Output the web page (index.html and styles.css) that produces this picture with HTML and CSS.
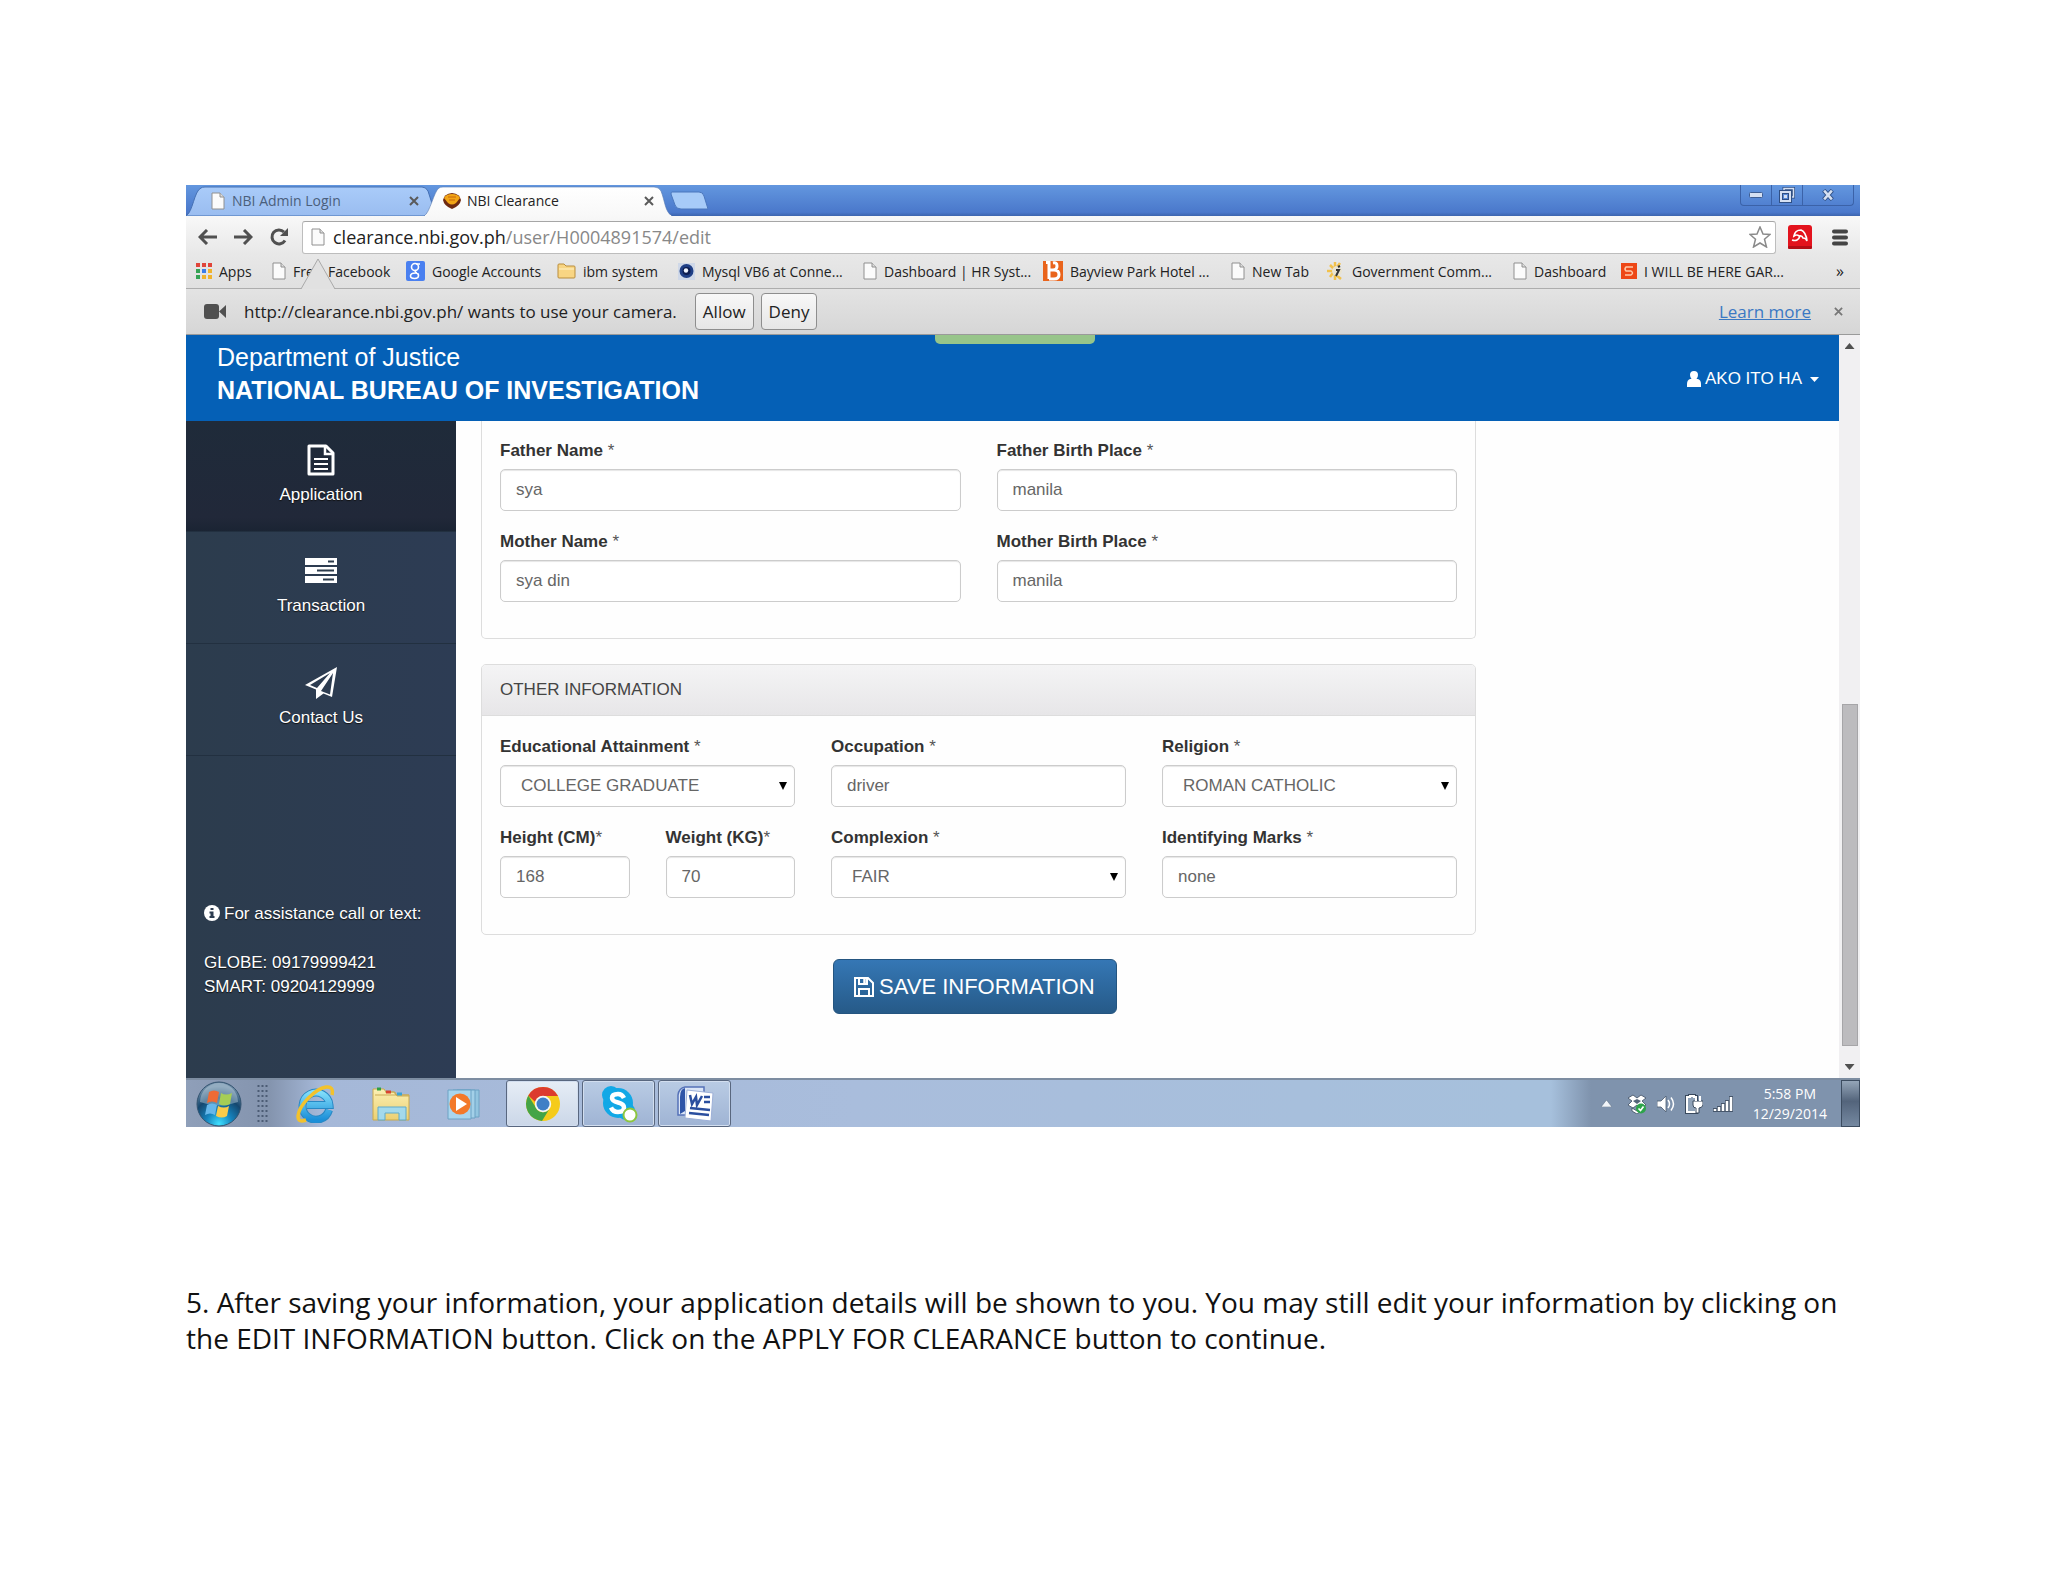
FILE: index.html
```html
<!DOCTYPE html>
<html lang="en">
<head>
<meta charset="utf-8">
<title>NBI Clearance guide</title>
<link rel="stylesheet" href="styles.css">
</head>
<body>
<svg class="defs" aria-hidden="true">
  <defs>
    <linearGradient id="tabBlue" x1="0" y1="0" x2="0" y2="1"><stop offset="0" stop-color="#a9cbf9"/><stop offset="1" stop-color="#9abdf0"/></linearGradient>
    <linearGradient id="tabWhite" x1="0" y1="0" x2="0" y2="1"><stop offset="0" stop-color="#fff"/><stop offset="1" stop-color="#f8f8f8"/></linearGradient>
    <radialGradient id="orb" cx=".5" cy=".95" r=".85"><stop offset="0" stop-color="#3fe0ff"/><stop offset=".35" stop-color="#1583bd"/><stop offset=".7" stop-color="#15476f"/><stop offset="1" stop-color="#6c8ba5"/></radialGradient>
    <linearGradient id="ie" x1="0" y1="0" x2="0" y2="1"><stop offset="0" stop-color="#7fdcfa"/><stop offset="1" stop-color="#1c8fd8"/></linearGradient>
    <linearGradient id="folder" x1="0" y1="0" x2="0" y2="1"><stop offset="0" stop-color="#fbf0b4"/><stop offset="1" stop-color="#ecd072"/></linearGradient>
    <symbol id="doc" viewBox="0 0 14 18"><path d="M1 1h8l4 4v12H1z" fill="#fbfbfb" stroke="#909090"/><path d="M9 1v4h4" fill="#ddd" stroke="#909090"/></symbol>
    <symbol id="cross" viewBox="0 0 10 10"><path d="M1 1l8 8M9 1L1 9" stroke="currentColor" stroke-width="2" fill="none"/></symbol>
  </defs>
</svg>
<main class="page">
  <section class="screen">
    <div class="tabstrip">
      <div class="tab">
        <svg class="tab-shape" viewBox="0 0 248 31"><path d="M0 31C7 27 8 6 15 3Q16 2 19 2H236Q240 2 242 6L250 31z" fill="url(#tabBlue)" stroke="#4470b4"/></svg>
        <svg class="i-doc" aria-hidden="true"><use href="#doc"/></svg>
        <span class="tab-title">NBI Admin Login</span>
        <button class="tab-close" aria-label="Close tab"><svg width="10" height="10"><use href="#cross"/></svg></button>
      </div>
      <div class="tab tab-on">
        <svg class="tab-shape" viewBox="0 0 248 31"><path d="M0 31C6 28 10 6 15 3Q16 2 19 2H230Q235 2 237 6C241 16 241 27 248 31z" fill="url(#tabWhite)" stroke="#5478b0" stroke-opacity=".6"/><path d="M1 31h246" stroke="#f8f8f8" stroke-width="2"/></svg>
        <svg width="18" height="16" viewBox="0 0 18 16" aria-hidden="true"><path d="M0 7Q1 1 9 0q8 1 9 7-1 6-9 9Q1 13 0 7z" fill="#6e2a12"/><path d="M1 5q2-4 8-4t8 4l-4 5q-4 3-8 0z" fill="#f2a516"/><path d="M5 4h8M6 7h6" stroke="#c9660c"/></svg>
        <span class="tab-title">NBI Clearance</span>
        <button class="tab-close" aria-label="Close tab"><svg width="10" height="10"><use href="#cross"/></svg></button>
      </div>
      <svg class="new-tab" width="38" height="20" viewBox="0 0 38 20"><path d="M2 1h27q4 0 5 4l4 13H11q-5 0-6-4L1 3q0-2 1-2z" fill="#a7cbf8" stroke="#4b77bd"/></svg>
      <div class="win-buttons">
        <button aria-label="Minimize"><svg width="14" height="6" viewBox="0 0 14 6"><rect x=".5" y=".5" width="13" height="5" rx="1" fill="#d5e0f2" stroke="#3f5f94"/></svg></button>
        <button aria-label="Restore"><svg width="16" height="16" viewBox="0 0 16 16" fill="none"><path d="M5 4V1.500h9.500V10H12" stroke="#2f4f84" stroke-width="3"/><path d="M5 4V1.500h9.500V10H12" stroke="#d5e0f2" stroke-width="1.500"/><rect x="2" y="5" width="9" height="9" stroke="#2f4f84" stroke-width="4"/><rect x="2" y="5" width="9" height="9" stroke="#d5e0f2" stroke-width="2"/><rect x="5" y="8" width="3" height="3" fill="#d5e0f2"/></svg></button>
        <button class="win-close" aria-label="Close"><svg width="12" height="12" viewBox="0 0 14 13"><path d="M2 1l10 11M12 1L2 12" stroke="#2f4f84" stroke-width="5"/><path d="M2.500 1.500l9 10M11.500 1.500l-9 10" stroke="#d5e0f2" stroke-width="3"/></svg></button>
      </div>
    </div>

    <div class="toolbar">
      <button class="nav" aria-label="Back"><svg width="19" height="16" viewBox="0 0 19 16"><path d="M9 1L2 8l7 7M2 8h17" fill="none" stroke="#505050" stroke-width="3"/></svg></button>
      <button class="nav" aria-label="Forward"><svg width="19" height="16" viewBox="0 0 19 16"><path d="M10 1l7 7-7 7M17 8H0" fill="none" stroke="#505050" stroke-width="3"/></svg></button>
      <button class="nav nav-last" aria-label="Reload"><svg width="19" height="18" viewBox="0 0 19 18"><path d="M15 12.500A7 7 0 1 1 14 4" fill="none" stroke="#505050" stroke-width="3"/><path d="M18 0v8h-8z" fill="#505050"/></svg></button>
      <div class="omnibox">
        <svg class="i-doc" aria-hidden="true"><use href="#doc"/></svg>
        <span class="url"><b>clearance.nbi.gov.ph</b>/user/H0004891574/edit</span>
        <svg width="22" height="22" viewBox="0 0 22 22"><path d="M11 1l3 7 7 .5-5.500 4.800L17.500 21 11 17l-6.500 4 2-7.700L1 8.500 8 8z" fill="#fff" stroke="#8a8a8a" stroke-width="1.500"/></svg>
      </div>
      <svg class="avira" width="24" height="24" viewBox="0 0 24 24"><rect width="24" height="24" rx="3" fill="#e3131d"/><rect y="21" width="24" height="3" rx="1" fill="#b40d15"/><path d="M6 11Q7 5 13 5q5 2 6 11-1-3-4-3-1-3-4-2-2-2-5 0zM12 11q-2 6-8 4" fill="none" stroke="#fff" stroke-width="1.700"/></svg>
      <svg width="16" height="17" viewBox="0 0 16 17"><path d="M2 2.500h12M2 8.500h12M2 14.500h12" stroke="#444" stroke-width="4" stroke-linecap="round"/></svg>
    </div>

    <nav class="bookmarks" aria-label="Bookmarks">
      <a href="#"><svg width="16" height="16" viewBox="0 0 16 16"><path d="M0 2h4M6 2h4M12 2h4" stroke="#e0453a" stroke-width="4"/><path d="M0 8h4" stroke="#35a355" stroke-width="4"/><path d="M6 8h4" stroke="#3b7de8" stroke-width="4"/><path d="M12 8h4M6 14h4M12 14h4" stroke="#f0b32d" stroke-width="4"/><path d="M0 14h4" stroke="#35a355" stroke-width="4"/></svg>Apps</a>
      <a href="#"><svg class="i-doc"><use href="#doc"/></svg>Fre</a>
      <a href="#">Facebook</a>
      <a href="#"><svg width="19" height="20" viewBox="0 0 19 20"><rect width="19" height="20" rx="2" fill="#4a80f0"/><g fill="none" stroke="#fff" stroke-width="1.600"><ellipse cx="9" cy="6" rx="3.500" ry="3.500"/><path d="M10 3h4M10 9q-2 2 1 3M12.500 14.500q0 3-4 3t-4-2.500q0-3 5-3 3 0 3 2.500z"/></g></svg>Google Accounts</a>
      <a href="#"><svg width="19" height="16" viewBox="0 0 19 16"><path d="M1 2q0-1 1-1h5l2 2h8q1 0 1 1v10q0 1-1 1H2q-1 0-1-1z" fill="#f8d583" stroke="#b98d3d"/><path d="M2 6h15" stroke="#fff2c8"/></svg>ibm system</a>
      <a href="#"><svg width="17" height="17" viewBox="0 0 17 17"><rect width="17" height="17" fill="#cfd8e8"/><circle cx="8.500" cy="8" r="7" fill="#1f3f86"/><circle cx="8.500" cy="8" r="4" fill="#0c1c50"/><circle cx="8" cy="7.500" r="2.200" fill="#eef5ff"/></svg>Mysql VB6 at Conne...</a>
      <a href="#"><svg class="i-doc"><use href="#doc"/></svg>Dashboard | HR Syst...</a>
      <a href="#"><svg width="20" height="20" viewBox="0 0 20 20"><rect width="20" height="20" fill="#e9641c"/><path d="M3 1.500h3V18M6 9h5q5 0 5 4.500T11 18H6M8 9h2q4 0 4-4t-4-3" fill="none" stroke="#fff" stroke-width="3"/></svg>Bayview Park Hotel ...</a>
      <a href="#"><svg class="i-doc"><use href="#doc"/></svg>New Tab</a>
      <a href="#"><svg width="18" height="18" viewBox="0 0 18 18"><path d="M8 0v18M0 9h9M3 3l8 8M13 1L3 15M8 12l6 5" stroke="#f2c14b" stroke-width="2.500"/><circle cx="10" cy="9" r="5" fill="#e9e3d0"/><path d="M13 4l-2 1M9 8h3l-3 6" fill="none" stroke="#333" stroke-width="2"/></svg>Government Comm...</a>
      <a href="#"><svg class="i-doc"><use href="#doc"/></svg>Dashboard</a>
      <a href="#"><svg width="16" height="16" viewBox="0 0 16 16"><rect width="16" height="16" fill="#ee4716"/><path d="M12 4H5q-2 2 0 4h5q3 2 0 4H4" fill="none" stroke="#ffc9a8" stroke-width="1.500"/></svg>I WILL BE HERE GAR...</a>
      <button class="more" aria-label="More bookmarks">»</button>
    </nav>

    <div class="infobar">
      <svg class="notch" width="36" height="31" viewBox="0 0 36 31"><path d="M0 31h1L18 1l17 30h1" fill="#e1e1e1" stroke="#a9a9a9"/></svg>
      <svg width="23" height="15" viewBox="0 0 23 15"><rect width="15" height="15" rx="3" fill="#505050"/><path d="M15 7.500L22 1v13z" fill="#505050"/></svg>
      <span class="ask">http://clearance.nbi.gov.ph/ wants to use your camera.</span>
      <button class="ib">Allow</button>
      <button class="ib">Deny</button>
      <a class="learn" href="#">Learn more</a>
      <button class="ib-close" aria-label="Dismiss"><svg width="9" height="9"><use href="#cross"/></svg></button>
    </div>

    <div class="view">
      <div class="site">
        <header class="banner">
          <h1><span>Department of Justice</span><strong>NATIONAL BUREAU OF INVESTIGATION</strong></h1>
          <span class="toast"></span>
          <button class="user"><svg width="14" height="16" viewBox="0 0 14 16"><path d="M7 0a4 4 0 0 1 4 4q0 2-1.500 4H11q3 1 3 5v3H0v-3q0-4 3-5h1.500Q3 6 3 4a4 4 0 0 1 4-4z" fill="#fff"/></svg>AKO ITO HA<svg class="caret" width="9" height="5" viewBox="0 0 9 5"><path d="M0 0h9L4.500 5z" fill="#fff"/></svg></button>
        </header>
        <div class="columns">
          <aside class="side">
            <a class="side-item side-on" href="#"><svg width="28" height="32" viewBox="0 0 28 32"><path d="M2 2h17l7 7v21H2z" fill="none" stroke="#fff" stroke-width="3" stroke-linejoin="round"/><path d="M18 2v8h8" fill="none" stroke="#fff" stroke-width="2.500"/><path d="M7 15h14M7 20h14M7 25h14" stroke="#fff" stroke-width="2.200"/></svg>Application</a>
            <a class="side-item" href="#"><svg width="32" height="32" viewBox="0 0 32 32"><path d="M0 3h32v7H0zM0 12h32v7H0zM0 21h32v7H0z" fill="#fff"/><path d="M23 6.500h6M12 15.500h17M18 24.500h11" stroke="#2d3c4c" stroke-width="2"/></svg>Transaction</a>
            <a class="side-item" href="#"><svg width="32" height="32" viewBox="0 0 32 32"><path fill-rule="evenodd" d="M32 0L27 30 18.500 26.500 11 32V22.500L0 18zM25 6L5 18l7 3zM28 6L16 24l9 3.500z" fill="#fff"/></svg>Contact Us</a>
            <div class="help">
              <p><svg width="16" height="16" viewBox="0 0 16 16"><circle cx="8" cy="8" r="8" fill="#fff"/><path d="M6.500 3h3v2h-3zM5.500 6.500h4V11h1v2h-5v-2h1V8.500h-1z" fill="#2d3c50"/></svg>For assistance call or text:</p>
              <p>GLOBE: 09179999421<br>SMART: 09204129999</p>
            </div>
          </aside>
          <form class="form">
            <fieldset class="panel panel-cut">
              <div class="grid two">
                <div class="field"><label for="fn">Father Name <i>*</i></label><input id="fn" value="sya"></div>
                <div class="field"><label for="fb">Father Birth Place <i>*</i></label><input id="fb" value="manila"></div>
                <div class="field"><label for="mn">Mother Name <i>*</i></label><input id="mn" value="sya din"></div>
                <div class="field"><label for="mb">Mother Birth Place <i>*</i></label><input id="mb" value="manila"></div>
              </div>
            </fieldset>
            <section class="panel">
              <h2>OTHER INFORMATION</h2>
              <div class="grid three">
                <div class="field"><label for="ed">Educational Attainment <i>*</i></label><div class="pick"><select id="ed"><option>COLLEGE GRADUATE</option></select></div></div>
                <div class="field"><label for="oc">Occupation <i>*</i></label><input id="oc" value="driver"></div>
                <div class="field"><label for="re">Religion <i>*</i></label><div class="pick"><select id="re"><option>ROMAN CATHOLIC</option></select></div></div>
                <div class="pair">
                  <div class="field"><label for="he">Height (CM)<i>*</i></label><input id="he" value="168"></div>
                  <div class="field"><label for="we">Weight (KG)<i>*</i></label><input id="we" value="70"></div>
                </div>
                <div class="field"><label for="co">Complexion <i>*</i></label><div class="pick"><select id="co"><option>FAIR</option></select></div></div>
                <div class="field"><label for="im">Identifying Marks <i>*</i></label><input id="im" value="none"></div>
              </div>
            </section>
            <button class="save" type="button"><svg width="20" height="20" viewBox="0 0 20 20" fill="none" stroke="#fff" stroke-width="2"><path d="M1 1h13l5 5v13H1z"/><path d="M5 1v6h8V1M5 19v-7h10v7"/><path d="M10.500 2v4" stroke-width="2.500"/></svg>SAVE INFORMATION</button>
          </form>
        </div>
      </div>
      <div class="scroll" aria-hidden="true">
        <span class="up"></span>
        <span class="thumb"></span>
        <span class="down"></span>
      </div>
    </div>

    <footer class="taskbar">
      <svg class="start" width="46" height="46" viewBox="0 0 46 46"><circle cx="23" cy="23" r="22" fill="url(#orb)" stroke="#33536f"/><path d="M4 21a19 19 0 0 1 38 0q-19 7-38 0z" fill="#cfe0ea" opacity=".4"/><path d="M13 11q5-3 10 0l-2 11q-5-3-10 0z" fill="#ee6b35"/><path d="M25 12q5 3 11 0l-2 11q-6 3-11 0z" fill="#a6ce55"/><path d="M11 24q5-3 10 0l-2 10q-5-3-10 0z" fill="#66b7ea"/><path d="M22 25q6 3 11 0l-2 10q-5 3-11 0z" fill="#fbcb49"/></svg>
      <svg class="grip" width="11" height="40" viewBox="0 0 11 40"><path d="M1.500 1v38M5.500 1v38M9.500 1v38" stroke="#4c5c75" stroke-width="2" stroke-dasharray="2 3"/></svg>
      <div class="apps">
        <svg width="40" height="38" viewBox="0 0 40 38"><path d="M34 25A13.500 13.500 0 1 1 34.500 20H12" fill="none" stroke="#2888c4" stroke-width="8"/><path d="M34 25A13.500 13.500 0 1 1 34.500 20H12" fill="none" stroke="url(#ie)" stroke-width="6"/><path d="M37 10Q39 1 31 2C20 4 4 20 3 31q0 7 8 4" fill="none" stroke="#f3c22c" stroke-width="3.500"/></svg>
        <svg width="40" height="36" viewBox="0 0 40 36"><path d="M2 3h11l2 3h8l2 3h13v25H2z" fill="url(#folder)" stroke="#c9a94c"/><path d="M14 6h10l2 4h12M4 9h34" stroke="#c9ab56" fill="none"/><path d="M6 3h4" stroke="#2ea043" stroke-width="3"/><path d="M15 6h5" stroke="#d9442e" stroke-width="3"/><path d="M26 8h5" stroke="#39a3d6" stroke-width="3"/><path d="M7 34V21h28v13h-7v-7H14v7z" fill="#9fdaf2" stroke="#58a8cf" opacity=".95"/></svg>
        <svg width="34" height="32" viewBox="0 0 34 32"><path d="M10 2h22v27H10z" fill="#93c5e0" stroke="#6ca2c4"/><path d="M6 2h22v28H6z" fill="#a3d0e8" stroke="#6ca2c4"/><path d="M1 2h23v29H1z" fill="#a9d6ee" stroke="#6ca2c4"/><circle cx="13" cy="16" r="10.500" fill="#f3792a"/><path d="M9 9v14l11-7z" fill="#fff"/></svg>
      </div>
      <button class="task task-on" aria-label="Chrome"><svg width="36" height="36" viewBox="0 0 36 36"><circle cx="18" cy="18" r="17" fill="#f5cb1b"/><path d="M3.300 9.500A17 17 0 0 1 33 10H18a8 8 0 0 0-7.700 6z" fill="#dc3b2e"/><path d="M3.300 9.500A17 17 0 0 0 17 35l8-13a8 8 0 0 1-14.500-1z" fill="#44a447"/><circle cx="18" cy="18" r="8.200" fill="#f4f6f8"/><circle cx="18" cy="18" r="6.500" fill="#3f7fc6"/></svg></button>
      <button class="task" aria-label="Skype"><svg width="38" height="38" viewBox="0 0 38 38"><circle cx="18" cy="18" r="15" fill="#12a8e6"/><circle cx="11" cy="10" r="9" fill="#12a8e6"/><circle cx="26" cy="26" r="9" fill="#12a8e6"/><path d="M24 13q-2-4-6-4-6 0-6 4 0 3 6 4.500t6 5Q24 27 18 27q-5 0-7-4.500" fill="none" stroke="#fff" stroke-width="4.500"/><circle cx="30" cy="30" r="6.500" fill="#fff" stroke="#8cc63f" stroke-width="2"/></svg></button>
      <button class="task" aria-label="Word"><svg width="38" height="38" viewBox="0 0 38 38"><path d="M9 2h19v28H2V10q1-7 7-8z" fill="#dbe6f7" stroke="#5572b8" stroke-width="1.500"/><path d="M9 3Q4 4 4 12v17l5-3z" fill="#2f55a8"/><path d="M11 5l26 3-2 28-26-3z" fill="#fff" stroke="#9db0d8"/><path d="M14 10l2 9 4-7 1 8 5-9" fill="none" stroke="#2b4f9f" stroke-width="2.500"/><path d="M28 12h6M28 17h6M14 23l20 2M13 28l20 2" stroke="#2b4f9f" stroke-width="2.500"/></svg></button>
      <div class="tray">
        <svg width="11" height="7" viewBox="0 0 11 7"><path d="M0 7l5.500-7L11 7z" fill="#f2f5f9" stroke="#56687f" stroke-width=".5"/></svg>
        <div class="tray-icons">
          <svg width="19" height="20" viewBox="0 0 19 20"><path d="M5 1l4 3 4-3 5 3-4 3 4 4-5 3-4-3-4 3-5-3 4-4-4-3zM4 14l5 3 4-3v3l-4 3-5-3z" fill="#fff" stroke="#3c4c60" stroke-width=".8"/><path d="M5 7l4-2 4 2-4 3z" fill="#536579"/><circle cx="13" cy="14.500" r="5" fill="#2da44a"/><path d="M10.500 14.500l2 2 3-4" fill="none" stroke="#fff" stroke-width="1.700"/></svg>
          <svg width="18" height="18" viewBox="0 0 18 18"><path d="M0 6h4l5-5v16l-5-5H0z" fill="#fff" stroke="#4a5a6e" stroke-width=".8"/><path d="M11 5q3 4 0 8M14 2.500q5 6.500 0 13" fill="none" stroke="#fff" stroke-width="1.500"/></svg>
          <svg width="18" height="20" viewBox="0 0 18 20"><path d="M5 1h4v2h2v15H2V3h3z" fill="none" stroke="#39495d" stroke-width="4"/><path d="M5 2h4v1h2v15H2V3h3z" fill="#8fa2b8" stroke="#fff" stroke-width="2"/><path d="M8 7h10v4q-1 3-4 3v5h-3v-5q-3 0-3-3z" fill="#fff" stroke="#39495d"/><path d="M11 2v5M15 2v5" stroke="#fff" stroke-width="2"/></svg>
          <svg width="20" height="16" viewBox="0 0 20 16"><path d="M2 12v4M6 10v6M10 7v9M14 4v12M18 0v16" stroke="#46566b" stroke-width="4"/><path d="M2 13v2M6 11v4M10 8v7M14 5v10M18 1v14" stroke="#fff" stroke-width="2.500"/></svg>
        </div>
        <time>5:58 PM<br>12/29/2014</time>
        <span class="peek"></span>
      </div>
    </footer>
  </section>
  <p class="step">5. After saving your information, your application details will be shown to you. You may still edit your information by clicking on the EDIT INFORMATION button. Click on the APPLY FOR CLEARANCE button to continue.</p>
</main>
</body>
</html>
```
FILE: styles.css
```css
* { box-sizing: border-box; }
body { margin: 0; background: #fff; color: #111; }
button { border: 0; padding: 0; background: none; font: inherit; color: inherit; }
svg { flex: none; display: block; }
.defs { position: absolute; width: 0; height: 0; }
.page { padding: 185px 188px 80px 186px; }
.screen { font-family: "Open Sans", sans-serif; background: #fff; }
.i-doc { width: 14px; height: 18px; }

/* Browser chrome */
.tabstrip { display: flex; height: 31px; background: linear-gradient(#6397df, #4a78cb 88%, #3c64ae); overflow: hidden; }
.tab { position: relative; isolation: isolate; display: flex; align-items: center; width: 248px; margin-right: -10px; padding: 0 15px 0 25px; gap: 7px; color: #4b5f7c; font-size: 14px; }
.tab-on { z-index: 1; padding-left: 19px; padding-right: 18px; gap: 6px; color: #222; }
.tab-shape { position: absolute; inset: 0; z-index: -1; width: 248px; height: 31px; overflow: visible; }
.tab-title { flex: 1; white-space: nowrap; }
.tab-close { color: #5a5a5a; }
.new-tab { margin: 6px 0 0 8px; }
.win-buttons { display: flex; height: 21px; margin-left: auto; margin-right: 6px; border: 1px solid #3b62a8; border-top: 0; border-radius: 0 0 4px 4px; overflow: hidden; }
.win-buttons button { display: grid; place-items: center; width: 31px; border-right: 1px solid #3b62a8; }
.win-buttons .win-close { width: 50px; border: 0; }

.toolbar { display: flex; align-items: center; height: 38px; padding: 4px 12px 0; background: linear-gradient(#f8f8f8, #e8e8e8); }
.nav { width: 36px; }
.nav-last { width: 32px; }
.omnibox { flex: 1; display: flex; align-items: center; gap: 8px; height: 33px; padding: 0 4px 0 8px; background: #fff; border: 1px solid #bdbdbd; border-top-color: #a6a6a6; border-radius: 3px; }
.url { flex: 1; font-size: 18px; color: #888; white-space: nowrap; }
.url b { font-weight: 400; color: #222; }
.avira { margin: 0 20px 0 12px; }

.bookmarks { display: grid; grid-template-columns: 76px 56px 78px 151px 121px 185px 180px 188px 96px 186px 108px 1fr auto; align-items: center; height: 34px; padding: 0 16px 0 10px; background: linear-gradient(#e8e8e8, #e0e0e0); font-size: 14px; color: #222; }
.bookmarks a { display: flex; align-items: center; gap: 7px; color: inherit; text-decoration: none; white-space: nowrap; }
.more { font-size: 16px; }

.infobar { position: relative; display: flex; align-items: center; height: 47px; padding: 0 17px 0 18px; border-top: 1px solid #adadad; border-bottom: 1px solid #9a9a9a; background: linear-gradient(#e3e3e3, #d6d6d6); font-size: 17px; color: #222; }
.notch { position: absolute; left: 114px; top: -31px; }
.ask { margin: 0 18px 0 17px; white-space: nowrap; }
.ib { height: 37px; margin-right: 7px; padding: 0 7px; border: 1px solid #8e8e8e; border-radius: 4px; background: linear-gradient(#f8f8f8, #e6e6e6); }
.learn { margin-left: auto; color: #3a78c3; }
.ib-close { margin-left: 23px; color: #777; }

/* Web page */
.view { display: flex; font: 17px/24px "Liberation Sans", Arial, sans-serif; }
.site { flex: 1; background: #fefefe; }
.banner { position: relative; display: flex; justify-content: space-between; align-items: center; height: 86px; padding: 0 20px 0 31px; background: #0560b6; color: #fff; }
h1 { margin: 0 0 8px; font-size: 25px; line-height: 33px; font-weight: 400; }
h1 span, h1 strong { display: block; }
.toast { position: absolute; top: 0; right: 45%; width: 160px; height: 9px; border-radius: 0 0 5px 5px; background: #97c58a; }
.user { display: flex; align-items: center; gap: 4px; padding-top: 2px; }
.caret { margin-left: 4px; }
.columns { display: flex; }

.side { display: flex; flex-direction: column; width: 270px; background: linear-gradient(90deg, #2c3c4d, #2d3c54); color: #fff; }
.side-item { display: flex; flex-direction: column; align-items: center; gap: 7px; height: 111px; padding-top: 23px; border-bottom: 1px solid #223040; color: #fff; text-decoration: none; text-shadow: 0 1px 1px #111; }
.side-item + .side-item { height: 112px; }
.side-on { background: linear-gradient(#1f2b3a, #212839 88%, #1a2433); }
.help { margin-top: 146px; padding-left: 18px; text-shadow: 0 1px 1px #111; }
.help p { margin: 0 0 25px; display: block; }
.help svg { display: inline-block; vertical-align: -2px; margin-right: 4px; }

.form { flex: 1; padding: 0 25px 64px; }
.panel { width: 995px; max-width: 100%; margin: 0 0 25px; padding: 0; border: 1px solid #ddd; border-radius: 5px; }
.panel-cut { border-top: 0; border-radius: 0 0 5px 5px; }
h2 { margin: 0; padding: 13px 18px; border-bottom: 1px solid #ddd; border-radius: 4px 4px 0 0; background: linear-gradient(#f4f4f5, #e7e6e8); font-size: 17px; line-height: 24px; font-weight: 400; color: #444; }
.grid { display: grid; column-gap: 36px; row-gap: 19px; padding: 19px 18px 36px; }
.panel-cut .grid { padding-top: 18px; }
.two { grid-template-columns: 1fr 1fr; }
.three { grid-template-columns: 1fr 1fr 1fr; }
.pair { display: grid; grid-template-columns: 1fr 1fr; gap: 36px; }
.field { display: flex; flex-direction: column; gap: 6px; min-width: 0; }
label { font-weight: 700; color: #333; white-space: nowrap; }
label i { font-weight: 400; font-style: normal; color: #555; }
input, select { width: 100%; height: 42px; padding: 0 15px; border: 1px solid #ccc; border-radius: 5px; background: #fff; box-shadow: inset 0 1px 1px #e6e6e6; font: inherit; color: #666; }
.pick { position: relative; }
select { appearance: none; padding-left: 20px; }
.pick::after { content: ""; position: absolute; right: 8px; top: 17px; width: 8px; height: 8px; background: #000; clip-path: polygon(0 0, 100% 0, 50% 100%); }
.save { display: flex; align-items: center; gap: 5px; height: 55px; margin: -1px 0 0 352px; padding: 0 21px 0 20px; border: 1px solid #245580; border-radius: 6px; background: linear-gradient(#3577b5, #265a88); color: #fff; font-size: 22px; }

.scroll { display: flex; flex-direction: column; align-items: center; width: 21px; padding: 8px 0; background: #f1f0f2; }
.up, .down { width: 10px; height: 6px; background: #505050; clip-path: polygon(0 100%, 50% 0, 100% 100%); }
.up { margin-bottom: auto; }
.down { clip-path: polygon(0 0, 100% 0, 50% 100%); margin-top: 18px; }
.thumb { width: 16px; height: 47%; border: 1px solid #a6a5a8; background: #bcbbbe; }

/* Taskbar */
.taskbar { display: flex; align-items: stretch; height: 49px; border-top: 2px solid #7d8da1; background: linear-gradient(90deg, #8f9fb9, #8494ae 5%, #a5b8d8 8%, #a9bddc 40%, #a6c0dc 80%); }
.start { align-self: center; margin-left: 10px; }
.grip { align-self: center; margin-left: 15px; }
.apps { display: flex; align-items: center; gap: 36px; padding: 0 25px 0 27px; }
.task { display: grid; place-items: center; width: 73px; margin-right: 3px; border: 1px solid #59677f; border-radius: 3px; background: linear-gradient(#b9cbe4, #9fb4d4); box-shadow: inset 0 0 0 1px #d2deef; }
.task-on { background: linear-gradient(#e6edf6, #cbd7e8); }
.tray { display: flex; align-items: center; margin-left: auto; padding-left: 50px; background: linear-gradient(90deg, transparent, #7f93ad 40px); color: #fff; }
.tray-icons { display: flex; align-items: center; gap: 10px; padding: 0 20px 0 16px; }
.tray time { font-size: 14px; line-height: 20px; text-align: center; padding-right: 14px; }
.peek { align-self: stretch; width: 19px; border: 1px solid #3c4c60; background: linear-gradient(#94a5b8, #53647b 45%, #7589a1); }

.step { margin: 157px 0 0; font: 28px/36px "Open Sans", sans-serif; color: #111; }
```
